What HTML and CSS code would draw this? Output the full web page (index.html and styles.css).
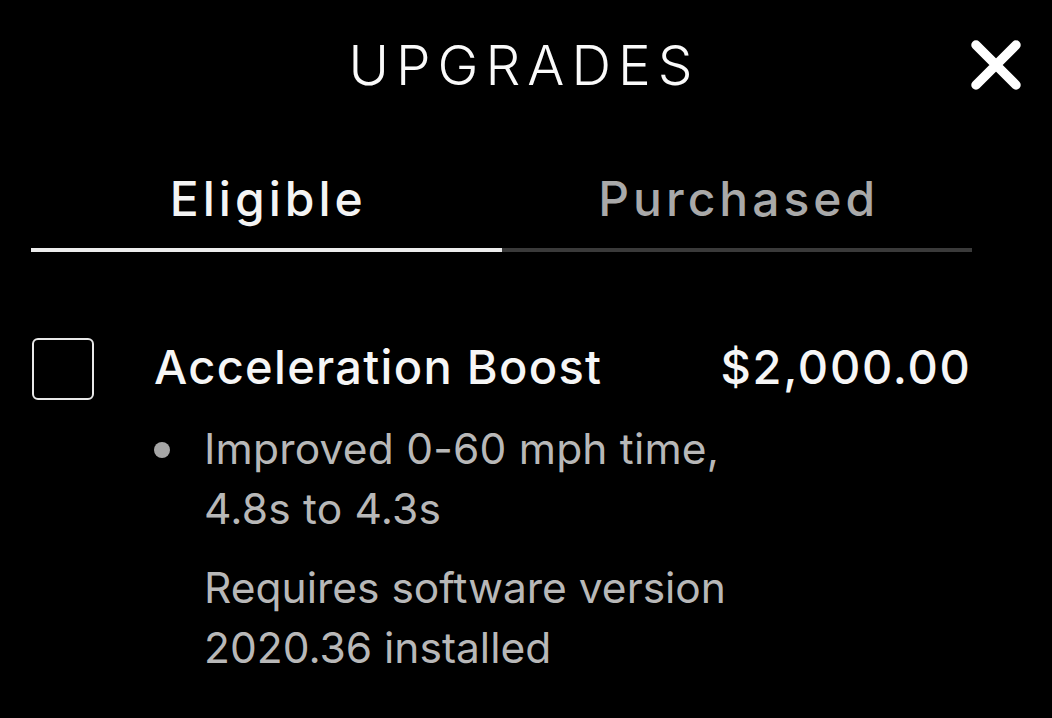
FILE: index.html
```html
<!DOCTYPE html>
<html lang="en">
<head>
<meta charset="utf-8">
<title>Upgrades</title>
<link rel="stylesheet" href="styles.css">
</head>
<body>
<div class="screen">
  <header class="header">
    <div class="header-side"></div>
    <h1 class="title">UPGRADES</h1>
    <div class="header-side header-right">
      <button class="close" aria-label="Close">
        <svg viewBox="0 0 52 52" width="52" height="52">
          <path d="M6 6 L46 46 M46 6 L6 46" stroke="#fff" stroke-width="9.5" stroke-linecap="round" fill="none"/>
        </svg>
      </button>
    </div>
  </header>

  <nav class="tabs">
    <div class="tab tab-active">Eligible</div>
    <div class="tab">Purchased</div>
  </nav>

  <section class="item">
    <div class="checkbox"></div>
    <div class="item-body">
      <div class="item-head">
        <span class="item-name">Acceleration Boost</span>
        <span class="item-price">$2,000.00</span>
      </div>
      <div class="bullet-item">
        <span class="dot"></span>
        <p class="desc">Improved 0-60 mph time,<br>4.8s to 4.3s</p>
      </div>
      <p class="desc note">Requires software version<br>2020.36 installed</p>
    </div>
  </section>
</div>
</body>
</html>
```

FILE: styles.css
```css
html, body {
  margin: 0;
  padding: 0;
  background: #000;
}

body {
  width: 1052px;
  height: 718px;
  overflow: hidden;
  font-family: Inter, Lato, "Noto Sans", sans-serif;
  font-variant-ligatures: none;
  color: #fff;
}

.screen {
  padding: 37px 0 0 0;
}

.header {
  display: grid;
  grid-template-columns: 1fr auto 1fr;
  align-items: center;
  padding: 0 30px 0 20px;
}

.title {
  margin: 0;
  padding-left: 6px;
  font-size: 55px;
  line-height: 56px;
  font-weight: 300;
  letter-spacing: 7px;
  color: #fafafa;
}

.header-right {
  display: flex;
  justify-content: flex-end;
}

.close {
  background: none;
  border: 0;
  padding: 0;
  width: 52px;
  height: 52px;
  display: block;
}

.close svg {
  display: block;
}

.tabs {
  display: flex;
  margin: 81px 80px 0 31px;
}

.tab {
  flex: 1;
  text-align: center;
  padding-left: 4px;
  font-size: 48px;
  line-height: 49px;
  font-weight: 500;
  letter-spacing: 4px;
  color: #a9a9a9;
  padding-bottom: 25px;
  border-bottom: 4px solid #3a3a3a;
}

.tab-active {
  color: #f4f4f4;
  border-bottom-color: #ececec;
}

.item {
  display: flex;
  align-items: flex-start;
  margin: 86px 82px 0 32px;
}

.checkbox {
  flex: none;
  width: 58px;
  height: 58px;
  border: 2.5px solid #e8e8e8;
  border-radius: 6px;
}

.item-body {
  flex: 1;
  margin-left: 60px;
  padding-top: 5px;
}

.item-head {
  display: flex;
  justify-content: space-between;
  font-size: 47px;
  line-height: 48px;
  font-weight: 500;
  color: #f6f6f6;
}

.item-name {
  letter-spacing: 1.3px;
}

.item-price {
  letter-spacing: 1.7px;
  margin-right: -1.5px;
}

.bullet-item {
  display: flex;
  align-items: flex-start;
  margin-top: 28px;
}

.dot {
  flex: none;
  width: 16px;
  height: 16px;
  border-radius: 50%;
  background: #a6a6a6;
  margin: 23px 34px 0 0;
}

.desc {
  margin: 0;
  font-size: 42.5px;
  line-height: 60px;
  font-weight: 400;
  letter-spacing: 0.2px;
  color: #b8b8b8;
}

.note {
  margin-top: 19px;
  margin-left: 50px;
  letter-spacing: 0;
}
```
